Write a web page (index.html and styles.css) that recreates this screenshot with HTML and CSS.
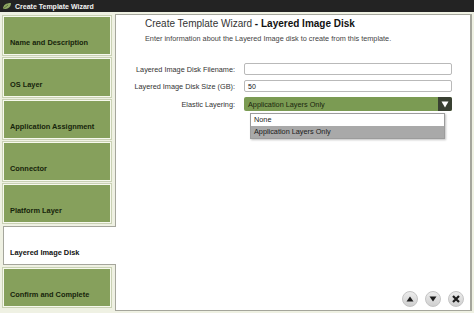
FILE: index.html
```html
<!DOCTYPE html>
<html lang="en">
<head>
    <meta charset="UTF-8">
    <title>Create Template Wizard</title>
    <link rel="stylesheet" href="styles.css">
</head>
<body>
    <div class="window">
        <header class="titlebar">
            <svg class="leaf" width="10" height="8" viewBox="0 0 10 8">
                <path d="M1 7 C1 3 4 1 9 1 C9 5 6 7 2 7 Z" fill="#8fa864"/>
                <path d="M1 7 L6 3" stroke="#4d6130" stroke-width="0.8"/>
            </svg>
            <span>Create Template Wizard</span>
        </header>

        <div class="wizBody">
            <nav class="steps">
                <div class="step">Name and Description</div>
                <div class="step">OS Layer</div>
                <div class="step">Application Assignment</div>
                <div class="step">Connector</div>
                <div class="step">Platform Layer</div>
                <div class="step active">Layered Image Disk</div>
                <div class="step">Confirm and Complete</div>
            </nav>

            <main class="panel">
                <h1 class="heading">Create Template Wizard <b>- Layered Image Disk</b></h1>
                <p class="subtitle">Enter information about the Layered Image disk to create from this template.</p>

                <div class="form">
                    <label class="lbl">Layered Image Disk Filename:</label>
                    <div class="field"></div>

                    <label class="lbl">Layered Image Disk Size (GB):</label>
                    <div class="field">50</div>

                    <label class="lbl">Elastic Layering:</label>
                    <div class="selectWrap">
                        <div class="select">
                            <span>Application Layers Only</span>
                            <span class="arrow">
                                <svg width="8" height="7" viewBox="0 0 8 7"><path d="M0.5 0.5 H7.5 L4 6.5 Z" fill="#fff"/></svg>
                            </span>
                        </div>
                        <ul class="options">
                            <li>None</li>
                            <li class="sel">Application Layers Only</li>
                        </ul>
                    </div>
                </div>

                <div class="actions">
                    <button class="round" title="Up">
                        <svg width="8" height="6" viewBox="0 0 8 6"><path d="M4 0.5 L7.5 5.5 H0.5 Z" fill="#1d1d1d"/></svg>
                    </button>
                    <button class="round" title="Down">
                        <svg width="8" height="6" viewBox="0 0 8 6"><path d="M0.5 0.5 H7.5 L4 5.5 Z" fill="#1d1d1d"/></svg>
                    </button>
                    <button class="round" title="Close">
                        <svg width="8" height="8" viewBox="0 0 8 8"><path d="M1 1 L7 7 M7 1 L1 7" stroke="#1d1d1d" stroke-width="2.2"/></svg>
                    </button>
                </div>
            </main>
        </div>
    </div>
</body>
</html>
```

FILE: styles.css
```css
*{
    box-sizing: border-box;
    margin: 0;
    padding: 0;
}

body{
    font-family: "Liberation Sans", Arial, sans-serif;
    background-color: #eff1e3;
}

.window{
    width: 474px;
    height: 313px;
    display: flex;
    flex-direction: column;
}

.titlebar{
    height: 12px;
    background-color: #232323;
    color: #f2f2f2;
    font-size: 7px;
    font-weight: bold;
    display: flex;
    align-items: center;
    padding-left: 2px;
    gap: 3px;
}

.wizBody{
    flex: 1;
    display: flex;
    background-color: #eff1e3;
}

.steps{
    width: 115px;
    flex-shrink: 0;
    padding: 4px 0 0 3px;
    display: flex;
    flex-direction: column;
    gap: 3px;
}

.step{
    width: 108px;
    height: 39px;
    background-color: #86a05c;
    border: 1px solid #f7f9ee;
    outline: 1px solid #c9d1b4;
    color: #16240b;
    font-size: 7.4px;
    font-weight: bold;
    display: flex;
    align-items: flex-end;
    padding: 0 0 7px 6px;
}

.step.active{
    width: 113px;
    background-color: #ffffff;
    border: 1px solid #a5a69c;
    border-right: none;
    outline: none;
    color: #111111;
    position: relative;
    z-index: 1;
}

.panel{
    flex: 1;
    margin: 2px 2px 2px 0;
    background-color: #ffffff;
    border: 1px solid #a5a69c;
    border-right: 2px solid #a5a69c;
    display: flex;
    flex-direction: column;
}

.heading{
    font-size: 10px;
    font-weight: normal;
    color: #333333;
    padding: 3px 0 0 29px;
    line-height: 12px;
}

.heading b{
    color: #111111;
}

.subtitle{
    font-size: 7.3px;
    color: #444444;
    padding: 4px 0 0 29px;
}

.form{
    display: grid;
    grid-template-columns: 119px 208px;
    column-gap: 9px;
    row-gap: 5px;
    margin-top: 20px;
    font-size: 7.3px;
    color: #333333;
    align-items: center;
}

.lbl{
    text-align: right;
}

.field{
    height: 12px;
    border: 1px solid #b9b9b9;
    border-radius: 2px;
    font-size: 7px;
    color: #111;
    padding: 2px 3px;
    line-height: 7px;
}

.selectWrap{
    position: relative;
}

.select{
    height: 14px;
    background-color: #7b9b53;
    border-radius: 2px;
    display: flex;
    align-items: center;
    justify-content: space-between;
    color: #1a260d;
    padding-left: 4px;
    overflow: hidden;
}

.arrow{
    width: 14px;
    height: 14px;
    background-color: #394032;
    display: flex;
    align-items: center;
    justify-content: center;
}

.options{
    position: absolute;
    left: 6px;
    top: 16px;
    width: 195px;
    list-style: none;
    background-color: #ffffff;
    border: 1px solid #9c9c9c;
    box-shadow: 1px 1px 2px rgba(0,0,0,0.25);
    color: #222;
}

.options li{
    height: 12px;
    line-height: 12px;
    padding-left: 3px;
}

.options li.sel{
    background-color: #a9a9a9;
    color: #1b1b1b;
}

.actions{
    margin-top: auto;
    display: flex;
    justify-content: flex-end;
    gap: 7px;
    padding: 0 6px 3px 0;
}

.round{
    width: 16px;
    height: 16px;
    border-radius: 50%;
    border: 1px solid #c4c4c4;
    background: linear-gradient(#ececec, #cfcfcf);
    display: flex;
    align-items: center;
    justify-content: center;
}
```
